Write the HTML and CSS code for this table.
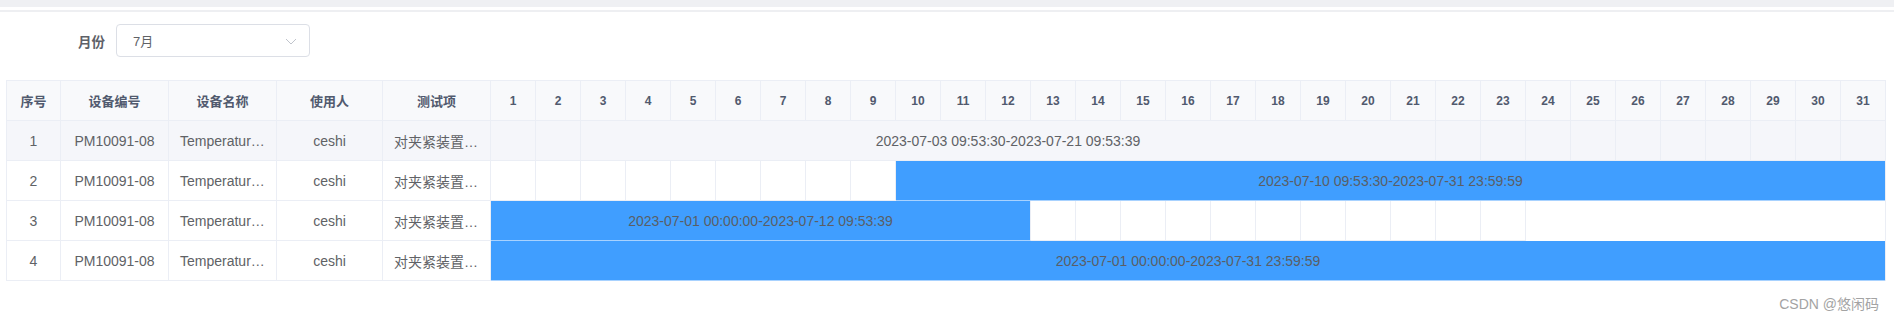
FILE: index.html
```html
<!DOCTYPE html>
<html lang="zh-CN">
<head>
<meta charset="utf-8">
<title>设备使用排期</title>
<link rel="stylesheet" href="styles.css">
</head>
<body>
<div class="topbar"></div>
<div class="divider"></div>
<form class="filter">
  <label class="filter-label">月份</label>
  <div class="select">
    <span class="select-value">7月</span>
    <svg class="select-arrow" width="12" height="7" viewBox="0 0 12 7"><path d="M1 1 L6 6 L11 1" fill="none" stroke="#c0c4cc" stroke-width="1"/></svg>
  </div>
</form>
<div class="table-wrap">
<table class="grid">
  <colgroup>
    <col class="c-no"><col class="c-code"><col class="c-name"><col class="c-user"><col class="c-item">
    <col class="c-day"><col class="c-day"><col class="c-day"><col class="c-day"><col class="c-day"><col class="c-day"><col class="c-day"><col class="c-day"><col class="c-day"><col class="c-day">
    <col class="c-day"><col class="c-day"><col class="c-day"><col class="c-day"><col class="c-day"><col class="c-day"><col class="c-day"><col class="c-day"><col class="c-day"><col class="c-day">
    <col class="c-day"><col class="c-day"><col class="c-day"><col class="c-day"><col class="c-day"><col class="c-day"><col class="c-day"><col class="c-day"><col class="c-day"><col class="c-day">
    <col class="c-last">
  </colgroup>
  <thead>
    <tr>
      <th>序号</th><th>设备编号</th><th>设备名称</th><th>使用人</th><th>测试项</th>
      <th class="day">1</th><th class="day">2</th><th class="day">3</th><th class="day">4</th><th class="day">5</th><th class="day">6</th><th class="day">7</th><th class="day">8</th><th class="day">9</th><th class="day">10</th>
      <th class="day">11</th><th class="day">12</th><th class="day">13</th><th class="day">14</th><th class="day">15</th><th class="day">16</th><th class="day">17</th><th class="day">18</th><th class="day">19</th><th class="day">20</th>
      <th class="day">21</th><th class="day">22</th><th class="day">23</th><th class="day">24</th><th class="day">25</th><th class="day">26</th><th class="day">27</th><th class="day">28</th><th class="day">29</th><th class="day">30</th>
      <th class="day end">31</th>
    </tr>
  </thead>
  <tbody>
    <tr class="hover">
      <td class="center">1</td><td class="center">PM10091-08</td><td class="left">Temperatur…</td><td class="center">ceshi</td><td class="left">对夹紧装置…</td>
      <td></td><td></td>
      <td colspan="19" class="span">2023-07-03 09:53:30-2023-07-21 09:53:39</td>
      <td></td><td></td><td></td><td></td><td></td><td></td><td></td><td></td><td></td><td class="end"></td>
    </tr>
    <tr>
      <td class="center">2</td><td class="center">PM10091-08</td><td class="left">Temperatur…</td><td class="center">ceshi</td><td class="left">对夹紧装置…</td>
      <td></td><td></td><td></td><td></td><td></td><td></td><td></td><td></td><td></td>
      <td colspan="22" class="span busy end">2023-07-10 09:53:30-2023-07-31 23:59:59</td>
    </tr>
    <tr>
      <td class="center">3</td><td class="center">PM10091-08</td><td class="left">Temperatur…</td><td class="center">ceshi</td><td class="left">对夹紧装置…</td>
      <td colspan="12" class="span busy">2023-07-01 00:00:00-2023-07-12 09:53:39</td>
      <td></td><td></td><td></td><td></td><td></td><td></td><td></td><td></td><td></td><td></td><td></td>
    </tr>
    <tr>
      <td class="center">4</td><td class="center">PM10091-08</td><td class="left">Temperatur…</td><td class="center">ceshi</td><td class="left">对夹紧装置…</td>
      <td colspan="31" class="span busy end">2023-07-01 00:00:00-2023-07-31 23:59:59</td>
    </tr>
  </tbody>
</table>
</div>
<div class="watermark">CSDN @悠闲码</div>
</body>
</html>
```

FILE: styles.css
```css
html, body {
  margin: 0;
  padding: 0;
  background: #ffffff;
}
body {
  position: relative;
  width: 1894px;
  height: 319px;
  font-family: "Liberation Sans", Arial, "Noto Sans CJK SC", sans-serif;
  color: #606266;
  overflow: hidden;
}
.topbar {
  height: 7px;
  background: #eff0f3;
}
.divider {
  margin-top: 3px;
  height: 2px;
  background: #eeeff2;
}
.filter {
  display: flex;
  align-items: center;
  margin: 12px 0 0 6px;
  height: 33px;
}
.filter-label {
  box-sizing: border-box;
  width: 110px;
  padding-right: 11px;
  text-align: right;
  font-size: 13.5px;
  font-weight: bold;
  color: #5e6168;
}
.select {
  box-sizing: border-box;
  width: 194px;
  height: 33px;
  border: 1px solid #dcdfe6;
  border-radius: 4px;
  display: flex;
  align-items: center;
  justify-content: space-between;
  padding: 0 12px 0 16px;
}
.select-value {
  font-size: 13px;
  color: #606266;
}
.select-arrow {
  display: block;
  margin-top: 2px;
}
.table-wrap {
  margin: 23px 0 0 6px;
  width: 1880px;
  box-sizing: border-box;
  border: 1px solid #ebeef5;
  border-bottom: none;
}
.grid {
  width: 1878px;
  table-layout: fixed;
  border-collapse: separate;
  border-spacing: 0;
}
.c-no { width: 54px; }
.c-code { width: 108px; }
.c-name { width: 108px; }
.c-user { width: 106px; }
.c-item { width: 108px; }
.c-day { width: 45px; }
.c-last { width: 44px; }
.grid tr {
  height: 40px;
}
.grid th,
.grid td {
  padding: 0;
  border-right: 1px solid #ebeef5;
  border-bottom: 1px solid #ebeef5;
  white-space: nowrap;
  overflow: hidden;
}
.grid th {
  background: #f8f9fb;
  font-family: "Liberation Sans", Arial, "Noto Sans CJK SC", sans-serif;
  font-size: 13px;
  font-weight: bold;
  color: #515a6e;
  text-align: center;
}
.grid th.day {
  font-size: 12px;
}
.grid td {
  font-size: 14px;
  color: #606266;
}
.grid .end {
  border-right: none;
}
.grid td.center {
  text-align: center;
}
.grid td.left {
  text-align: left;
  padding-left: 11px;
}
.grid td.span {
  text-align: center;
}
.grid tr.hover td {
  background: #f5f6fa;
}
.grid td.busy {
  background: #409eff;
  border-bottom-color: #a8d2ff;
  color: #5a5e66;
}
.watermark {
  position: absolute;
  right: 15px;
  top: 293px;
  font-size: 14px;
  color: #a3a3a3;
}
```
